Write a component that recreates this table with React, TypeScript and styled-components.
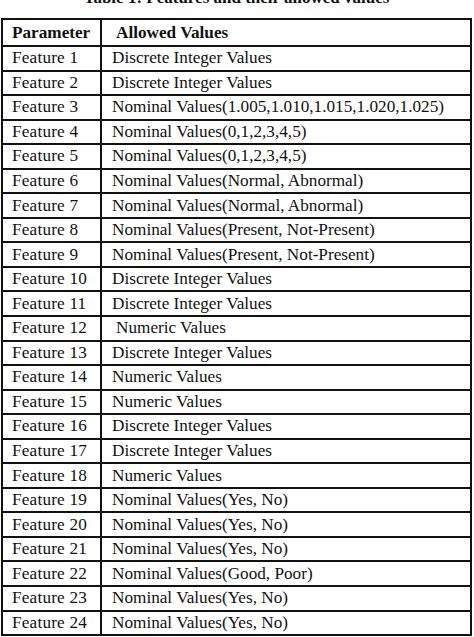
import React from "react";
import styled, { createGlobalStyle } from "styled-components";

const GlobalStyle = createGlobalStyle`
  html, body {
    margin: 0;
    padding: 0;
    background: #ffffff;
  }
  body {
    font-family: "Liberation Serif", "Times New Roman", serif;
    color: #111111;
    overflow: hidden;
  }
`;

const Page = styled.div`
  width: 474px;
  height: 637px;
  overflow: hidden;
  padding-left: 1px;
  box-sizing: border-box;
`;

const Caption = styled.div`
  margin-top: -10px;
  height: 28px;
  line-height: 16px;
  font-size: 17px;
  font-weight: 700;
  text-align: center;
  padding-right: 2px;
`;

const Table = styled.table`
  width: 471px;
  border-collapse: collapse;
  border: 2px solid #111;
  font-size: 17.2px;
  table-layout: fixed;
`;

const HeadRow = styled.tr`
  height: 27px;
`;

const Row = styled.tr`
  height: 24.55px;
`;

const Cell = styled.td<{ $bold?: boolean; $indent?: boolean; $first?: boolean }>`
  border: 2px solid #111;
  padding: 0 0 0 ${(p) => (p.$indent ? 14 : p.$first ? 9 : 10)}px;
  font-weight: ${(p) => (p.$bold ? 700 : 400)};
  letter-spacing: ${(p) => (p.$first && !p.$bold ? "0.2px" : "0")};
  white-space: nowrap;
  vertical-align: middle;
  line-height: 18px;
  overflow: hidden;
`;

const rows: [string, string, boolean?][] = [
  ["Feature 1", "Discrete Integer Values"],
  ["Feature 2", "Discrete Integer Values"],
  ["Feature 3", "Nominal Values(1.005,1.010,1.015,1.020,1.025)"],
  ["Feature 4", "Nominal Values(0,1,2,3,4,5)"],
  ["Feature 5", "Nominal Values(0,1,2,3,4,5)"],
  ["Feature 6", "Nominal Values(Normal, Abnormal)"],
  ["Feature 7", "Nominal Values(Normal, Abnormal)"],
  ["Feature 8", "Nominal Values(Present, Not-Present)"],
  ["Feature 9", "Nominal Values(Present, Not-Present)"],
  ["Feature 10", "Discrete Integer Values"],
  ["Feature 11", "Discrete Integer Values"],
  ["Feature 12", "Numeric Values", true],
  ["Feature 13", "Discrete Integer Values"],
  ["Feature 14", "Numeric Values"],
  ["Feature 15", "Numeric Values"],
  ["Feature 16", "Discrete Integer Values"],
  ["Feature 17", "Discrete Integer Values"],
  ["Feature 18", "Numeric Values"],
  ["Feature 19", "Nominal Values(Yes, No)"],
  ["Feature 20", "Nominal Values(Yes, No)"],
  ["Feature 21", "Nominal Values(Yes, No)"],
  ["Feature 22", "Nominal Values(Good, Poor)"],
  ["Feature 23", "Nominal Values(Yes, No)"],
  ["Feature 24", "Nominal Values(Yes, No)"],
];

export default function App() {
  return (
    <>
      <GlobalStyle />
      <Page>
        <Caption>Table 1: Features and their allowed values</Caption>
        <Table>
          <colgroup>
            <col style={{ width: 99 }} />
            <col />
          </colgroup>
          <thead>
            <HeadRow>
              <Cell as="th" $bold $first style={{ textAlign: "left" }}>
                Parameter
              </Cell>
              <Cell as="th" $bold $indent style={{ textAlign: "left" }}>
                Allowed Values
              </Cell>
            </HeadRow>
          </thead>
          <tbody>
            {rows.map(([name, value, indent]) => (
              <Row key={name}>
                <Cell $first>{name}</Cell>
                <Cell $indent={indent}>{value}</Cell>
              </Row>
            ))}
          </tbody>
        </Table>
      </Page>
    </>
  );
}
